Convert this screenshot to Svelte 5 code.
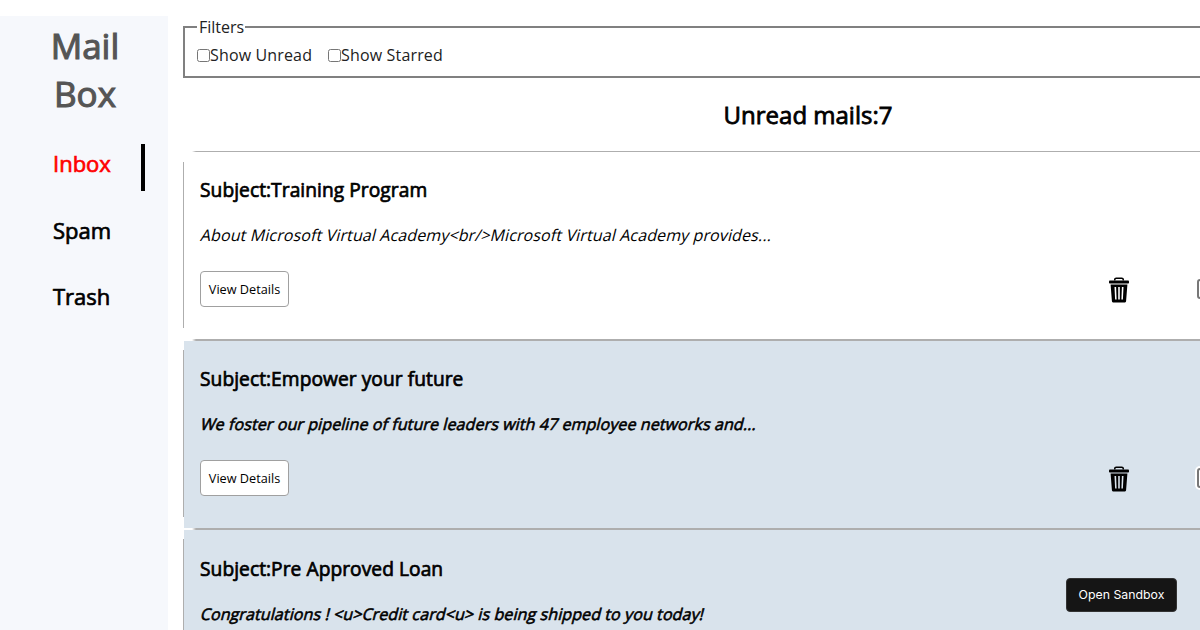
<script>
  const mails = [
    { subject: 'Training Program', text: 'About Microsoft Virtual Academy<br/>Microsoft Virtual Academy provides...', unread: false },
    { subject: 'Empower your future', text: 'We foster our pipeline of future leaders with 47 employee networks and...', unread: true },
    { subject: 'Pre Approved Loan', text: 'Congratulations ! <u>Credit card<u> is being shipped to you today!', unread: true }
  ];
</script>

<div class="page">
  <aside class="sidebar">
    <h1>Mail<br />Box</h1>
    <nav>
      <a href="#inbox" class="active">Inbox</a>
      <a href="#spam">Spam</a>
      <a href="#trash">Trash</a>
    </nav>
  </aside>

  <main>
    <fieldset>
      <legend>Filters</legend>
      <label><input type="checkbox" />Show Unread</label>
      <label><input type="checkbox" />Show Starred</label>
    </fieldset>

    <h2>Unread mails:7</h2>

    {#each mails as mail}
      <section class="card" class:unread={mail.unread}>
        <h3>Subject:{mail.subject}</h3>
        <p><span>{mail.text}</span></p>
        <div class="actions">
          <button class="details">View Details</button>
          <span class="icons">
            <svg width="22" height="26" viewBox="0 0 22 26" fill="currentColor">
              <path d="M6 3.4V2.6C6 1.4 7 .6 8.2.6h5.6C15 .6 16 1.4 16 2.6v.8h-1.5v-.7c0-.4-.3-.7-.7-.7H8.200c-.4 0-.7.3-.7.7v.7z" />
              <rect x="1" y="3.500" width="20" height="3" rx=".8" />
              <path fill-rule="evenodd" d="M2.600 7.500h16.800l-1.300 16.400c-.1 1-.9 1.600-1.900 1.600H5.800c-1 0-1.800-.6-1.900-1.600zM6.500 10l.6 12.500h1.500L8.100 10zm3.700 0v12.500h1.600V10zm3.700 0l-.5 12.500h1.500l.6-12.500z" />
            </svg>
            <span class="star"></span>
          </span>
        </div>
      </section>
    {/each}
  </main>

  <button class="sandbox">Open Sandbox</button>
</div>

<style>
  :global(body) {
    overflow: hidden;
    background: #fff;
  }
  .page {
    display: flex;
    align-items: flex-start;
    height: 630px;
    overflow: hidden;
    font-family: "Open Sans", sans-serif;
    color: #000;
  }
  .sidebar {
    flex: 0 0 168px;
    height: 614px;
    margin-top: 16px;
    background: #f6f8fc;
    text-align: center;
  }
  h1 {
    margin: 6px 0 0;
    padding-left: 2px;
    font-size: 35px;
    line-height: 48px;
    font-weight: 400;
    -webkit-text-stroke: 1.1px #555;
    color: #555;
  }
  nav {
    display: flex;
    flex-direction: column;
    margin-top: 26px;
  }
  nav a {
    display: block;
    height: 47px;
    margin-bottom: 19.5px;
    padding-left: 53px;
    width: 145px;
    box-sizing: border-box;
    text-align: left;
    font-size: 22px;
    line-height: 38px;
    font-weight: 400;
    -webkit-text-stroke: .7px;
    color: #000;
    text-decoration: none;
  }
  nav a.active {
    color: #f00;
    border-right: 4px solid #000;
  }
  main {
    flex: 0 0 1250px;
    margin-left: 15px;
  }
  fieldset {
    margin: 16px 0 0;
    height: 62px;
    box-sizing: border-box;
    padding: 0 0 4px 12px;
    border: 2px solid #808080;
    font-size: 16px;
    display: flex;
    gap: 16px;
    align-items: center;
  }
  legend {
    padding: 0 1px 0 2px;
    color: #222;
  }
  label {
    display: inline-flex;
    align-items: center;
    line-height: 22px;
    letter-spacing: .15px;
    color: #222;
  }
  input {
    margin: 0;
  }
  h2 {
    margin: 20px 0 20px;
    font-size: 24px;
    line-height: 33px;
    font-weight: 400;
    -webkit-text-stroke: .8px;
    text-align: center;
  }
  .card {
    position: relative;
    box-sizing: border-box;
    height: 189px;
    padding: 24px 16px 0;
    border-top: 2px solid transparent;
    border-left: 1px solid transparent;
    background-clip: padding-box;
  }
  .card:first-of-type {
    height: 188px;
    padding-top: 23px;
  }
  .card:last-of-type {
    padding-top: 25px;
  }
  .card.unread {
    background-color: #d9e3ec;
  }
  .card::before {
    content: "";
    position: absolute;
    top: -2px;
    left: 8px;
    right: 0;
    height: 2px;
    background: linear-gradient(to right, transparent, #aeaeae 4px);
  }
  .card:first-of-type::before {
    height: 1px;
  }
  .card::after {
    content: "";
    position: absolute;
    top: 9px;
    left: -1px;
    bottom: 11px;
    width: 1px;
    background: #aeaeae;
  }
  h3 {
    margin: 0;
    font-size: 19.2px;
    line-height: 27px;
    font-weight: 400;
    letter-spacing: .05px;
    -webkit-text-stroke: .7px;
  }
  p {
    margin: 21px 0 0;
    font-size: 16px;
    line-height: 22px;
    letter-spacing: .12px;
  }
  p span {
    display: inline-block;
    transform: skewX(-14deg);
    transform-origin: 0 16px;
  }
  .unread p {
    letter-spacing: .1px;
    -webkit-text-stroke: .6px;
  }
  .actions {
    display: flex;
    align-items: center;
    justify-content: space-between;
    margin-top: 25px;
  }
  .details {
    width: 89px;
    height: 36px;
    padding: 0;
    background: #fff;
    border: 1px solid #a0a0a0;
    border-radius: 4px;
    font-family: inherit;
    font-size: 12.700px;
    color: #000;
  }
  .icons {
    display: flex;
    align-items: center;
    gap: 67px;
    margin-right: 200px;
  }
  .icons svg {
    color: #000;
    margin-top: 1px;
  }
  .star {
    display: block;
    width: 16px;
    height: 16px;
    border: 2px solid #777;
    border-radius: 3px;
    background: #fff;
    box-shadow: 0 0 0 2px #fff;
  }
  .sandbox {
    position: fixed;
    left: 1066px;
    top: 578px;
    width: 111px;
    height: 34px;
    padding: 0 0 2px;
    background: #151515;
    color: #fff;
    border: 1px solid #333;
    border-radius: 4px;
    font-family: Inter, sans-serif;
    font-size: 12.300px;
  }
</style>
